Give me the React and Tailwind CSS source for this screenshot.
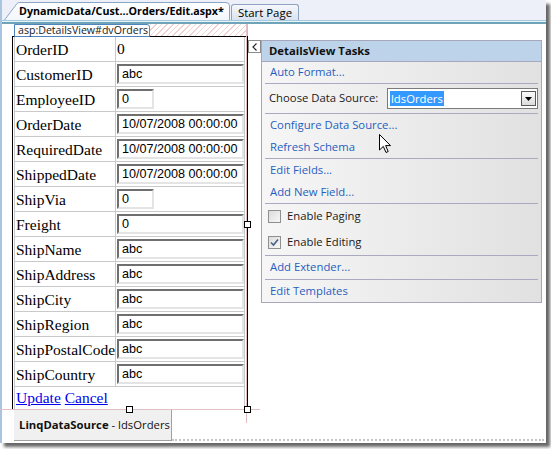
import React from "react";

const rows = [
  ["OrderID", "text", "0"],
  ["CustomerID", "wide", "abc"],
  ["EmployeeID", "short", "0"],
  ["OrderDate", "wide", "10/07/2008 00:00:00"],
  ["RequiredDate", "wide", "10/07/2008 00:00:00"],
  ["ShippedDate", "wide", "10/07/2008 00:00:00"],
  ["ShipVia", "short", "0"],
  ["Freight", "wide", "0"],
  ["ShipName", "wide", "abc"],
  ["ShipAddress", "wide", "abc"],
  ["ShipCity", "wide", "abc"],
  ["ShipRegion", "wide", "abc"],
  ["ShipPostalCode", "wide", "abc"],
  ["ShipCountry", "wide", "abc"],
];

function Field({ kind, value }) {
  if (kind === "text") {
    return (
      <span className="pl-[1px] font-['Liberation_Serif',serif] text-[15.5px] leading-none text-black">
        {value}
      </span>
    );
  }
  const w = kind === "wide" ? "w-[127px]" : "w-[37px]";
  return (
    <div
      className={`${w} ml-[1px] h-[20px] flex items-center pl-[3px] border-2 border-t-[#6f6f6f] border-l-[#6f6f6f] border-r-[#e4e4e4] border-b-[#e4e4e4] bg-white font-['Liberation_Sans',Arial,sans-serif] text-[12.6px] leading-none text-black overflow-hidden whitespace-nowrap`}
    >
      {value}
    </div>
  );
}

function Sep() {
  return <div className="mx-[3px] h-px bg-[#a9a9c0]" />;
}

function Link({ children, h }) {
  return (
    <div className={h + " flex items-center pl-[8px] text-[#1f5fbf]"}>{children}</div>
  );
}

function Check({ checked, label, h }) {
  return (
    <div className={h + " flex items-center pl-[6px] text-[#1a1a1a]"}>
      <div className="w-[13px] h-[13px] border border-[#8f8f8f] bg-gradient-to-br from-[#dcdcdc] to-[#f8f8f8] flex items-center justify-center">
        {checked && (
          <svg width="9" height="9" viewBox="0 0 9 9">
            <path d="M1 4.5 L3.5 7 L8 1.5" fill="none" stroke="#4a5f86" strokeWidth="1.6" />
          </svg>
        )}
      </div>
      <span className="ml-[6px]">{label}</span>
    </div>
  );
}

export default function App() {
  return (
    <div className="w-[551px] h-[449px] bg-white relative overflow-hidden">
      <div className="w-[546px] h-[443px] bg-white border-l-2 border-[#a9c4de] shadow-[4px_4px_3px_rgba(0,0,0,0.6)] flex flex-col font-['Open_Sans',sans-serif] text-[11.3px] relative">
        {/* tab strip */}
        <div className="h-[20px] bg-[#eef0f9] flex items-end pl-[2px] relative">
          <div className="relative h-[18px] w-[226px] flex items-center pl-[15px]">
            <svg className="absolute left-0 top-0" width="226" height="18" viewBox="0 0 226 18">
              <defs>
                <linearGradient id="tg" x1="0" y1="0" x2="0" y2="1">
                  <stop offset="0" stopColor="#ffffff" />
                  <stop offset="1" stopColor="#f2f7fc" />
                </linearGradient>
              </defs>
              <path d="M0.5 18 L13 1.5 Q14 0.5 16 0.5 L222 0.5 Q225.5 0.5 225.5 4 L225.5 18" fill="url(#tg)" stroke="#8ba6c4" />
            </svg>
            <span className="relative font-bold text-black text-[10.7px] whitespace-nowrap">
              DynamicData/Cust...Orders/Edit.aspx*
            </span>
          </div>
          <div className="ml-[1px] h-[16px] w-[68px] rounded-t-[3px] border border-b-0 border-[#8da3bf] bg-gradient-to-b from-[#f6f8fc] to-[#d9e2ee] flex items-center justify-center text-black text-[11.4px] whitespace-nowrap">
            Start Page
          </div>
        </div>
        <div className="h-px bg-[#a3c9dc]" />
        <div className="h-px bg-[#e9f4f8]" />
        <div className="h-[2px] bg-[#6ea3b8]" />

        {/* design surface */}
        <div className="flex flex-col relative">
          <div className="flex pl-[10px]">
            {/* DetailsView */}
            <div className="w-[236px] flex flex-col">
              <div className="h-[12px] flex">
                <div className="ml-[2px] w-[136px] h-[13px] border border-[#4f86c0] rounded-tr-[3px] bg-white flex items-center pl-[3px] text-[10.6px] text-[#1a1a1a] leading-none whitespace-nowrap relative z-10">
                  asp:DetailsView#dvOrders
                </div>
                <div className="flex-1 h-[12px] border-r border-[#dcb8b8] bg-[repeating-linear-gradient(135deg,#f0d2d2_0px,#f0d2d2_1px,#ffffff_1px,#ffffff_4px)]" />
              </div>
              <div className="h-[374px] border border-black bg-white">
                <div className="ml-[1px] w-[231px] h-full border-x border-[#c9c9c9] flex flex-col">
                  {rows.map(([label, kind, value]) => (
                    <div key={label} className="h-[25px] border-b border-[#c9c9c9] flex">
                      <div className="w-[101px] border-r border-[#c9c9c9] flex items-center pl-[1px] pt-[1px] font-['Liberation_Serif',serif] text-[15.5px] text-black whitespace-nowrap">
                        {label}
                      </div>
                      <div className="flex-1 flex items-center">
                        <Field kind={kind} value={value} />
                      </div>
                    </div>
                  ))}
                  <div className="h-[22px] flex items-center pl-[1px] font-['Liberation_Serif',serif] text-[15.5px]">
                    <span className="text-[#0000ee] underline">Update</span>
                    <span className="ml-[4px] text-[#0000ee] underline">Cancel</span>
                  </div>
                </div>
              </div>
            </div>

            {/* smart tag */}
            <div className="mt-[16px] w-[13px] h-[13px] border border-[#8a8a8a] bg-white flex items-center justify-center">
              <svg width="6" height="8" viewBox="0 0 6 8">
                <path d="M4.5 0.5 L1 4 L4.5 7.5" fill="none" stroke="#222" strokeWidth="1.2" />
              </svg>
            </div>
            <div className="mt-[16px] w-[281px] h-[263px] border border-[#a6a6bd] bg-gradient-to-r from-[#f6f6f6] to-[#e1e1e1] flex flex-col">
              <div className="h-[21px] bg-[#bcd3ea] border-b border-[#a6a6bd] flex items-center pl-[7px] font-bold text-[#111]">
                DetailsView Tasks
              </div>
              <Link h="h-[21px]">Auto Format...</Link>
              <Sep />
              <div className="h-[29px] flex items-center pl-[7px] text-[#1a1a1a]">
                <span className="w-[118px] whitespace-nowrap">Choose Data Source:</span>
                <div className="w-[151px] h-[21px] border border-[#7b7b7b] bg-white flex items-center pl-[2px] pr-[1px]">
                  <span className="h-[15px] px-[1px] bg-[#3399ff] text-white flex items-center leading-none">ldsOrders</span>
                  <div className="ml-auto w-[15px] h-[15px] border border-[#5a5a5a] bg-gradient-to-b from-[#fafafa] to-[#dcdcdc] flex items-center justify-center">
                    <svg width="7" height="4" viewBox="0 0 7 4">
                      <path d="M0 0 L7 0 L3.5 4 Z" fill="#000" />
                    </svg>
                  </div>
                </div>
              </div>
              <Sep />
              <Link h="h-[22px]">Configure Data Source...</Link>
              <Link h="h-[22px]">Refresh Schema</Link>
              <Sep />
              <Link h="h-[22px]">Edit Fields...</Link>
              <Link h="h-[22px]">Add New Field...</Link>
              <Sep />
              <Check h="h-[25px]" label="Enable Paging" />
              <Check h="h-[26px]" checked label="Enable Editing" />
              <Sep />
              <Link h="h-[23px]">Add Extender...</Link>
              <Sep />
              <Link h="h-[22px]">Edit Templates</Link>
            </div>
          </div>

          {/* LinqDataSource row */}
          <div className="flex pl-[12px]">
            <div className="w-[158px] h-[31px] bg-[#f0f0f0] border-r border-b border-[#a0a0a0] flex items-center pl-[5px] text-[#111] whitespace-nowrap">
              <span className="font-bold">LinqDataSource</span>
              <span>&nbsp;- ldsOrders</span>
            </div>
            <div className="flex-1 h-[31px] border-b-2 border-dotted border-[#c4c4c4] mr-[2px]" />
          </div>

          {/* guides and handles (overlays) */}
          <div className="absolute left-[-2px] top-[385px] w-[260px] h-px bg-[#e0c0c4]" />
          <div className="absolute left-[244px] top-[0px] w-px h-[399px] bg-[#e0c0c4]" />
          <div className="absolute left-[242px] top-[197px] w-[7px] h-[7px] border border-black bg-white" />
          <div className="absolute left-[124px] top-[382px] w-[7px] h-[7px] border border-black bg-white" />
          <div className="absolute left-[242px] top-[382px] w-[7px] h-[7px] border border-black bg-white" />

          {/* mouse cursor */}
          <svg className="absolute left-[377px] top-[110px]" width="13" height="20" viewBox="0 0 13 20">
            <path d="M0.5 0.5 L0.5 16 L4.3 12.4 L7 18.5 L9.2 17.5 L6.6 11.6 L11.5 11.6 Z" fill="#fff" stroke="#000" strokeWidth="1" strokeLinejoin="round" />
          </svg>
        </div>
      </div>
    </div>
  );
}
